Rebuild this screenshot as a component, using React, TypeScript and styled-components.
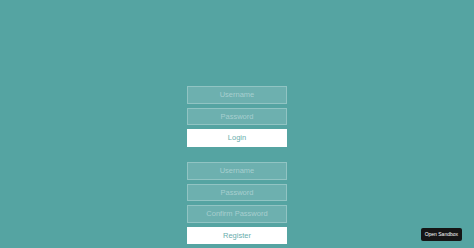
import { FC } from "react";
import styled, { createGlobalStyle } from "styled-components";

const GlobalStyle = createGlobalStyle`
  html, body {
    margin: 0;
    padding: 0;
    height: 100%;
    background: #55a4a2;
  }
  body {
    font-family: "Liberation Sans", Arial, sans-serif;
  }
  #root {
    min-height: 100%;
  }
`;

const App: FC = () => {
  return (
    <>
      <GlobalStyle />
      <Page>
        <Form>
          <Input type="text" placeholder="Username" />
          <Input type="password" placeholder="Password" />
          <Button type="button">Login</Button>
        </Form>
        <Form>
          <Input type="text" placeholder="Username" />
          <Input type="password" placeholder="Password" />
          <Input type="password" placeholder="Confirm Password" />
          <Button type="button">Register</Button>
        </Form>
      </Page>
      <Sandbox>Open Sandbox</Sandbox>
    </>
  );
};

export default App;

const Page = styled.div`
  display: flex;
  flex-direction: column;
  align-items: center;
  gap: 15.5px;
  padding-top: 86px;
`;

const Form = styled.form`
  display: flex;
  flex-direction: column;
  gap: 4px;
  width: 100px;
  margin: 0;
`;

const Input = styled.input`
  box-sizing: border-box;
  width: 100%;
  height: 17.5px;
  margin: 0;
  padding: 0;
  border: 1px solid rgba(255, 255, 255, 0.25);
  background: rgba(255, 255, 255, 0.14);
  color: #fff;
  font-family: "Liberation Sans", Arial, sans-serif;
  font-size: 7.5px;
  text-align: center;
  outline: none;

  &::placeholder {
    color: rgba(255, 255, 255, 0.4);
  }
`;

const Button = styled.button`
  box-sizing: border-box;
  width: 100%;
  height: 17.5px;
  margin: 0;
  padding: 0;
  border: 0;
  background: #fff;
  color: #6aaead;
  font-family: "Liberation Sans", Arial, sans-serif;
  font-size: 7.5px;
  cursor: pointer;
`;

const Sandbox = styled.div`
  position: fixed;
  right: 12px;
  bottom: 7px;
  padding: 3px 4px;
  background: #151515;
  color: #fff;
  border-radius: 2px;
  font-family: "Liberation Sans", Arial, sans-serif;
  font-size: 5px;
  line-height: 7px;
`;
